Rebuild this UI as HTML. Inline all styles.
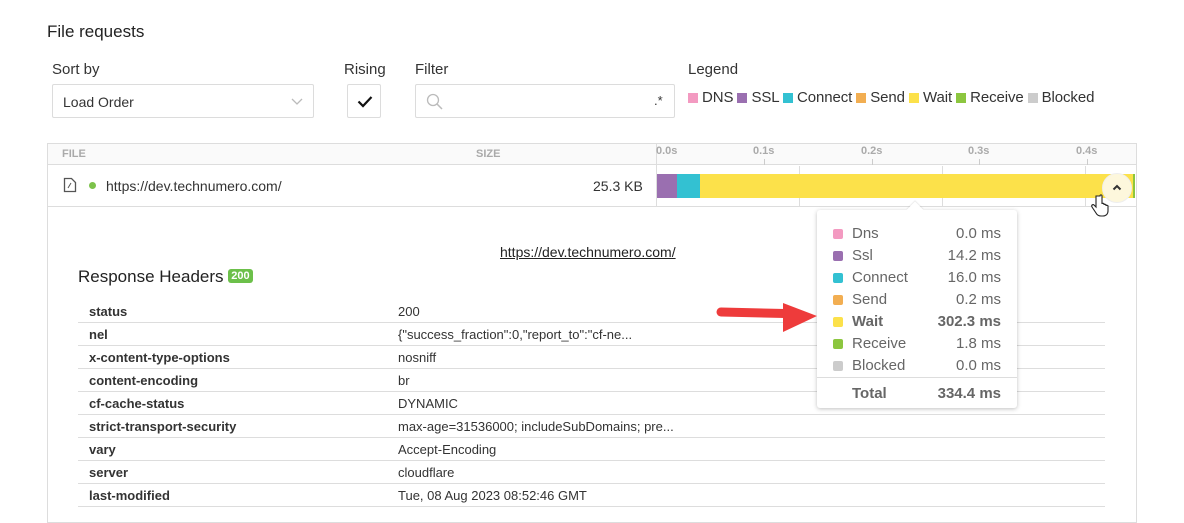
<!DOCTYPE html>
<html><head><meta charset="utf-8"><style>
*{box-sizing:border-box;margin:0;padding:0}
body{width:1184px;height:499px;overflow:hidden;background:#fff;font-family:"Liberation Sans",sans-serif;color:#333;position:relative}
.a{position:absolute;white-space:nowrap}
.lbl{font-size:15px;color:#333}
.box{position:absolute;border:1px solid #dcdcdc;border-radius:2px;background:#fff}
.leg{display:inline-block;width:10px;height:10px;margin:0 4px 0 0;vertical-align:-1px}
.th{font-size:11px;color:#aaa;font-weight:bold}
.row{position:absolute;left:78px;width:1027px;height:23px;border-bottom:1px solid #ddd;font-size:13px}
.row b{position:absolute;left:11px;top:4px;color:#333}
.row span{position:absolute;left:320px;top:4px;color:#333}
.tt{font-size:15px;color:#666}
.sq{position:absolute;left:16px;width:10px;height:10px;border-radius:2px}
</style></head><body>
<div class="a" style="left:47px;top:22px;font-size:17px;color:#222">File requests</div>
<div class="a lbl" style="left:52px;top:61px">Sort by</div>
<div class="box" style="left:52px;top:84px;width:262px;height:34px"><div class="a" style="left:10px;top:9px;font-size:14px;color:#333">Load Order</div><svg class="a" style="left:238px;top:13px" width="12" height="8"><path d="M1 1l5 5 5-5" stroke="#bbb" fill="none" stroke-width="1.3"/></svg></div>
<div class="a lbl" style="left:344px;top:61px">Rising</div>
<div class="box" style="left:347px;top:84px;width:34px;height:34px"><svg class="a" style="left:9px;top:10px" width="16" height="13"><path d="M1.5 6.5l4.5 4.5 8.5-9" stroke="#111" fill="none" stroke-width="2.2"/></svg></div>
<div class="a lbl" style="left:415px;top:61px">Filter</div>
<div class="box" style="left:415px;top:84px;width:260px;height:34px"><svg class="a" style="left:10px;top:8px" width="18" height="18"><circle cx="7" cy="7" r="5.5" stroke="#bbb" fill="none" stroke-width="1.3"/><path d="M11 11l5 5" stroke="#bbb" stroke-width="1.5"/></svg><div class="a" style="left:238px;top:8px;font-size:13px;color:#333">.*</div></div>
<div class="a lbl" style="left:688px;top:61px">Legend</div>
<div class="a" style="left:688px;top:89px;font-size:15px;color:#333;letter-spacing:-0.1px">
<i class="leg" style="background:#f39ac1"></i>DNS <i class="leg" style="background:#9a6fb0"></i>SSL <i class="leg" style="background:#33c1d2"></i>Connect <i class="leg" style="background:#f2ae52"></i>Send <i class="leg" style="background:#fce14a"></i>Wait <i class="leg" style="background:#8cc63f"></i>Receive <i class="leg" style="background:#ccc"></i>Blocked</div>

<div class="a" style="left:47px;top:143px;width:1090px;height:380px;border:1px solid #ddd"></div>
<div class="a" style="left:48px;top:144px;width:1088px;height:21px;background:#fafafa;border-bottom:1px solid #ddd"></div>
<div class="a th" style="left:62px;top:148px">FILE</div>
<div class="a th" style="left:476px;top:148px">SIZE</div>
<div class="a" style="left:656px;top:144px;width:1px;height:62px;background:#ddd"></div>
<div class="a th" style="left:656px;top:145px">0.0s</div><div class="a th" style="left:753px;top:145px">0.1s</div><div class="a th" style="left:861px;top:145px">0.2s</div><div class="a th" style="left:968px;top:145px">0.3s</div><div class="a th" style="left:1076px;top:145px">0.4s</div>
<div class="a" style="left:764px;top:159px;width:1px;height:6px;background:#ccc"></div><div class="a" style="left:872px;top:159px;width:1px;height:6px;background:#ccc"></div><div class="a" style="left:979px;top:159px;width:1px;height:6px;background:#ccc"></div><div class="a" style="left:1087px;top:159px;width:1px;height:6px;background:#ccc"></div>
<div class="a" style="left:48px;top:206px;width:1088px;height:1px;background:#ddd"></div>
<div class="a" style="left:799px;top:166px;width:1px;height:40px;background:#ddd"></div><div class="a" style="left:942px;top:166px;width:1px;height:40px;background:#ddd"></div><div class="a" style="left:1085px;top:166px;width:1px;height:40px;background:#ddd"></div>
<svg class="a" style="left:63px;top:177px" width="14" height="16"><path d="M1.5 1.5h7l4 4v9h-11z" fill="none" stroke="#555" stroke-width="1.3"/><path d="M5 11l3-5" stroke="#555"/></svg>
<div class="a" style="left:89px;top:182px;width:7px;height:7px;border-radius:50%;background:#7cc24a"></div>
<div class="a" style="left:106px;top:178px;font-size:14px;color:#333">https://dev.technumero.com/</div>
<div class="a" style="left:593px;top:178px;font-size:14px;color:#333">25.3 KB</div>
<div class="a" style="left:657px;top:174px;width:20px;height:24px;background:#9a6fb0"></div>
<div class="a" style="left:677px;top:174px;width:23px;height:24px;background:#33c1d2"></div>
<div class="a" style="left:700px;top:174px;width:433px;height:24px;background:#fce14a"></div>
<div class="a" style="left:1133px;top:174px;width:2px;height:24px;background:#8cc63f"></div>
<div class="a" style="left:1102px;top:173px;width:30px;height:30px;border-radius:50%;background:#fdf7dc;border:1px solid #eee"><svg class="a" style="left:9px;top:10px" width="10" height="7"><path d="M1.5 5.5l3.5-3.5 3.5 3.5" stroke="#333" fill="none" stroke-width="2"/></svg></div>
<svg class="a" style="left:1090px;top:194px" width="20" height="24"><path d="M6 2v11l-2-2c-1-1-3 0-2 2l4 6c1 2 3 3 5 3h2c3 0 5-2 5-5v-5c0-1-2-1-2 0v-1c0-1-2-1-2 0v-1c0-1-2-1-2 0V2c0-1.5-2-1.5-2 0z" fill="#fff" stroke="#222" stroke-width="1.1"/></svg>

<div class="a" style="left:500px;top:244px;font-size:14px;color:#222;text-decoration:underline">https://dev.technumero.com/</div>
<div class="a" style="left:78px;top:267px;font-size:17px;color:#222">Response Headers <span style="display:inline-block;background:#6cc04a;color:#fff;font-size:11px;font-weight:bold;padding:1px 3px;border-radius:3px;vertical-align:3px">200</span></div>
<div class="row" style="top:300px"><b>status</b><span>200</span></div>
<div class="row" style="top:323px"><b>nel</b><span>{"success_fraction":0,"report_to":"cf-ne...</span></div>
<div class="row" style="top:346px"><b>x-content-type-options</b><span>nosniff</span></div>
<div class="row" style="top:369px"><b>content-encoding</b><span>br</span></div>
<div class="row" style="top:392px"><b>cf-cache-status</b><span>DYNAMIC</span></div>
<div class="row" style="top:415px"><b>strict-transport-security</b><span>max-age=31536000; includeSubDomains; pre...</span></div>
<div class="row" style="top:438px"><b>vary</b><span>Accept-Encoding</span></div>
<div class="row" style="top:461px"><b>server</b><span>cloudflare</span></div>
<div class="row" style="top:484px"><b>last-modified</b><span>Tue, 08 Aug 2023 08:52:46 GMT</span></div>

<div class="a" style="left:817px;top:210px;width:200px;height:198px;background:#fff;border-radius:3px;box-shadow:0 1px 4px rgba(0,0,0,.25)">
<div class="a" style="left:92px;top:-6px;width:12px;height:12px;background:#fff;transform:rotate(45deg);box-shadow:-1px -1px 1px rgba(0,0,0,.08)"></div>
<div class="a" style="left:0;top:4px;width:200px;height:16px;background:#fff"></div>
<div class="sq" style="top:19px;background:#f39ac1"></div><div class="a tt" style="left:35px;top:15px">Dns</div><div class="a tt" style="right:16px;top:15px">0.0 ms</div>
<div class="sq" style="top:41px;background:#9a6fb0"></div><div class="a tt" style="left:35px;top:37px">Ssl</div><div class="a tt" style="right:16px;top:37px">14.2 ms</div>
<div class="sq" style="top:63px;background:#33c1d2"></div><div class="a tt" style="left:35px;top:59px">Connect</div><div class="a tt" style="right:16px;top:59px">16.0 ms</div>
<div class="sq" style="top:85px;background:#f2ae52"></div><div class="a tt" style="left:35px;top:81px">Send</div><div class="a tt" style="right:16px;top:81px">0.2 ms</div>
<div class="sq" style="top:107px;background:#fce14a"></div><div class="a tt" style="left:35px;top:103px;font-weight:bold">Wait</div><div class="a tt" style="right:16px;top:103px;font-weight:bold">302.3 ms</div>
<div class="sq" style="top:129px;background:#8cc63f"></div><div class="a tt" style="left:35px;top:125px">Receive</div><div class="a tt" style="right:16px;top:125px">1.8 ms</div>
<div class="sq" style="top:151px;background:#ccc"></div><div class="a tt" style="left:35px;top:147px">Blocked</div><div class="a tt" style="right:16px;top:147px">0.0 ms</div>
<div class="a" style="left:0;top:167px;width:200px;height:1px;background:#ddd"></div>
<div class="a tt" style="left:35px;top:175px;font-weight:bold">Total</div><div class="a tt" style="right:16px;top:175px;font-weight:bold">334.4 ms</div>
</div>
<svg class="a" style="left:715px;top:300px" width="105" height="36"><path d="M6 12l64 1.5" stroke="#ee3b3b" stroke-width="9" stroke-linecap="round"/><path d="M68 3l34 13-34 16z" fill="#ee3b3b"/></svg>
</body></html>
